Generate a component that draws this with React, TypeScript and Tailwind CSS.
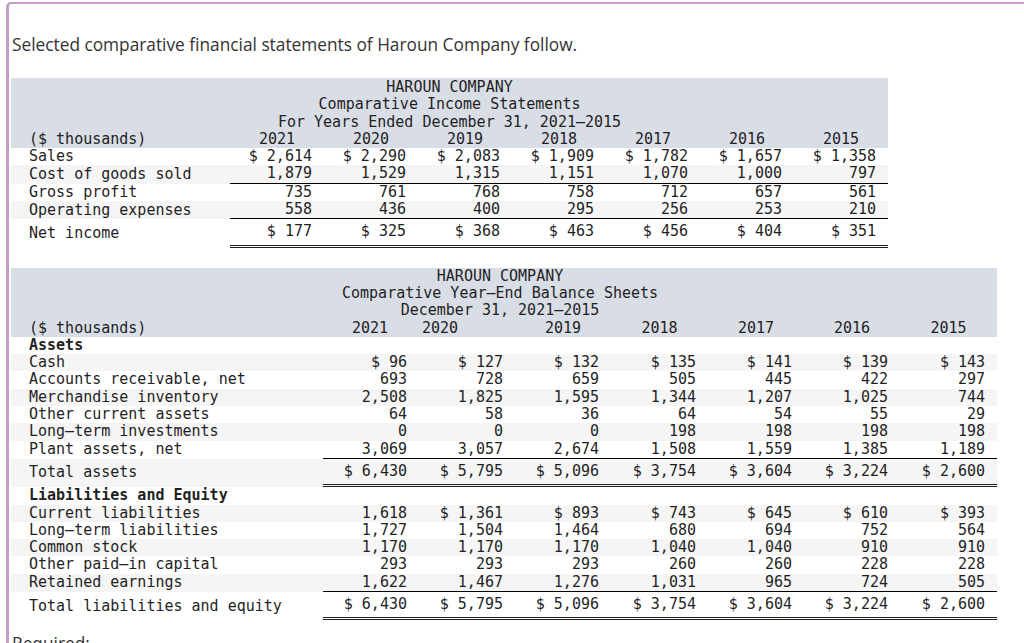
import React from 'react'

type Row = {
  label: string
  values?: string[]
  bold?: boolean
  underline?: boolean
  total?: boolean
}

const incomeYears = ['2021', '2020', '2019', '2018', '2017', '2016', '2015']

const incomeRows: Row[] = [
  { label: 'Sales', values: ['$ 2,614', '$ 2,290', '$ 2,083', '$ 1,909', '$ 1,782', '$ 1,657', '$ 1,358'] },
  { label: 'Cost of goods sold', values: ['1,879', '1,529', '1,315', '1,151', '1,070', '1,000', '797'], underline: true },
  { label: 'Gross profit', values: ['735', '761', '768', '758', '712', '657', '561'] },
  { label: 'Operating expenses', values: ['558', '436', '400', '295', '256', '253', '210'], underline: true },
  { label: 'Net income', values: ['$ 177', '$ 325', '$ 368', '$ 463', '$ 456', '$ 404', '$ 351'], total: true },
]

const balanceRows: Row[] = [
  { label: 'Assets', bold: true },
  { label: 'Cash', values: ['$ 96', '$ 127', '$ 132', '$ 135', '$ 141', '$ 139', '$ 143'] },
  { label: 'Accounts receivable, net', values: ['693', '728', '659', '505', '445', '422', '297'] },
  { label: 'Merchandise inventory', values: ['2,508', '1,825', '1,595', '1,344', '1,207', '1,025', '744'] },
  { label: 'Other current assets', values: ['64', '58', '36', '64', '54', '55', '29'] },
  { label: 'Long–term investments', values: ['0', '0', '0', '198', '198', '198', '198'] },
  { label: 'Plant assets, net', values: ['3,069', '3,057', '2,674', '1,508', '1,559', '1,385', '1,189'], underline: true },
  { label: 'Total assets', values: ['$ 6,430', '$ 5,795', '$ 5,096', '$ 3,754', '$ 3,604', '$ 3,224', '$ 2,600'], total: true },
  { label: 'Liabilities and Equity', bold: true },
  { label: 'Current liabilities', values: ['1,618', '$ 1,361', '$ 893', '$ 743', '$ 645', '$ 610', '$ 393'] },
  { label: 'Long–term liabilities', values: ['1,727', '1,504', '1,464', '680', '694', '752', '564'] },
  { label: 'Common stock', values: ['1,170', '1,170', '1,170', '1,040', '1,040', '910', '910'] },
  { label: 'Other paid–in capital', values: ['293', '293', '293', '260', '260', '228', '228'] },
  { label: 'Retained earnings', values: ['1,622', '1,467', '1,276', '1,031', '965', '724', '505'], underline: true },
  { label: 'Total liabilities and equity', values: ['$ 6,430', '$ 5,795', '$ 5,096', '$ 3,754', '$ 3,604', '$ 3,224', '$ 2,600'], total: true },
]

const mono = "font-['DejaVu_Sans_Mono',monospace]"

const DataRows = ({ rows }: { rows: Row[] }) => (
  <>
    {rows.map((row, i) => (
      <tr key={row.label} className={i % 2 === 1 ? 'bg-[#f5f5f5]' : 'bg-white'}>
        <td className={`pl-[18px] whitespace-pre ${row.bold ? 'font-bold' : ''} ${row.total ? 'py-[4px]' : ''}`}>
          {row.label}
        </td>
        {row.values
          ? row.values.map((v, j) => (
              <td
                key={j}
                className={`pr-[12px] text-right whitespace-pre ${
                  row.underline ? 'border-b border-black' : ''
                } ${row.total ? 'py-[4px] border-b-[3px] border-double border-[#222]' : ''}`}
              >
                {v}
              </td>
            ))
          : <td colSpan={7}></td>}
      </tr>
    ))}
  </>
)

export default function App() {
  return (
    <div className="bg-white min-h-[643px] pt-[2px] pl-[6px] overflow-hidden">
      <div className="border-l-[3px] border-t-[2px] border-[#c39fc8] rounded-tl-[5px] pt-[29px] min-h-[641px]">
        <p className="pl-[3px] text-[17.3px] leading-[24px] text-[#333] font-['Open_Sans',sans-serif]">
          Selected comparative financial statements of Haroun Company follow.
        </p>

        <table className={`ml-[2px] mt-[21px] w-[877px] table-fixed border-separate border-spacing-0 text-[15px] leading-[17.3px] text-[#1f1f1f] ${mono}`}>
          <colgroup>
            <col className="w-[219px]" />
            {incomeYears.map(y => <col key={y} className="w-[94px]" />)}
          </colgroup>
          <thead className="bg-[#d9dde6]">
            <tr><td colSpan={8} className="text-center pt-[1px]">HAROUN COMPANY</td></tr>
            <tr><td colSpan={8} className="text-center">Comparative Income Statements</td></tr>
            <tr><td colSpan={8} className="text-center whitespace-pre">For Years Ended December 31, 2021–2015</td></tr>
            <tr>
              <td className="pl-[18px]">($ thousands)</td>
              {incomeYears.map(y => <td key={y} className="text-center">{y}</td>)}
            </tr>
          </thead>
          <tbody>
            <DataRows rows={incomeRows} />
          </tbody>
        </table>

        <table className={`ml-[2px] mt-[20px] w-[986px] table-fixed border-separate border-spacing-0 text-[15px] leading-[17.3px] text-[#1f1f1f] ${mono}`}>
          <colgroup>
            <col className="w-[312px]" />
            <col className="w-[96px]" />
            <col className="w-[96px]" />
            <col className="w-[96px]" />
            <col className="w-[97px]" />
            <col className="w-[96px]" />
            <col className="w-[96px]" />
            <col className="w-[97px]" />
          </colgroup>
          <thead className="bg-[#d9dde6]">
            <tr><td colSpan={8} className="text-center pr-[8px]">HAROUN COMPANY</td></tr>
            <tr><td colSpan={8} className="text-center pr-[8px] whitespace-pre">Comparative Year–End Balance Sheets</td></tr>
            <tr><td colSpan={8} className="text-center pr-[8px] whitespace-pre">December 31, 2021–2015</td></tr>
            <tr>
              <td className="pl-[18px]">($ thousands)</td>
              <td className="text-right pr-[31px]">2021</td>
              <td className="text-right pr-[57px]">2020</td>
              <td className="text-center">2019</td>
              <td className="text-center">2018</td>
              <td className="text-center">2017</td>
              <td className="text-center">2016</td>
              <td className="text-center">2015</td>
            </tr>
          </thead>
          <tbody>
            <DataRows rows={balanceRows} />
          </tbody>
        </table>

        <p className="pl-[3px] mt-[12px] text-[17.3px] leading-[24px] text-[#333] font-['Open_Sans',sans-serif]">
          Required:
        </p>
      </div>
    </div>
  )
}
